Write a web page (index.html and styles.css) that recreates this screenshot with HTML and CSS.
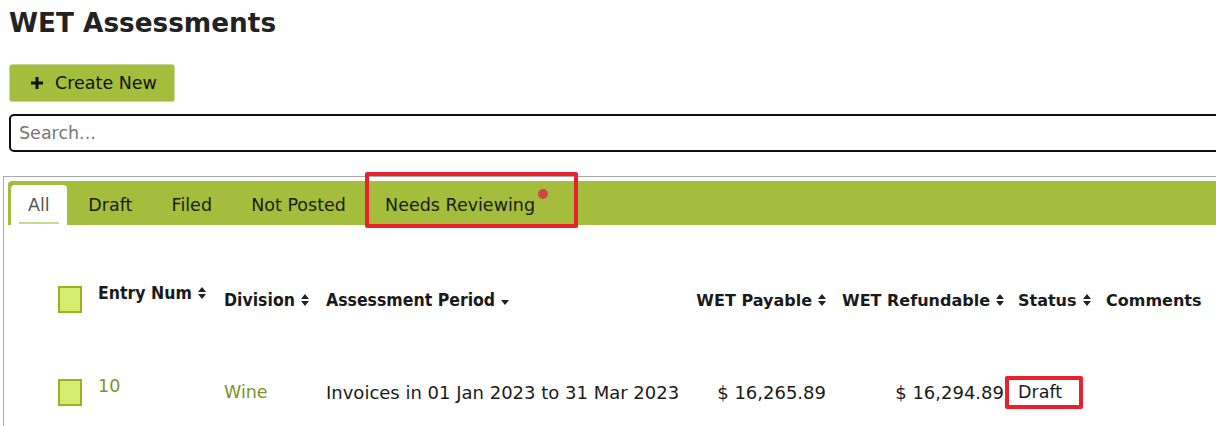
FILE: index.html
```html
<!DOCTYPE html>
<html>
<head>
<meta charset="utf-8">
<link rel="stylesheet" href="styles.css">
</head>
<body>
<div class="page">
  <h1 class="title">WET Assessments</h1>
  <button class="btn-create"><svg class="plus" viewBox="0 0 14 14" width="14" height="14"><path d="M7 1v12M1 7h12" stroke="#111" stroke-width="3"/></svg>Create New</button>
  <div class="search">Search...</div>
  <div class="panel">
    <div class="tabbar">
      <div class="tab active">All</div>
      <div class="tab">Draft</div>
      <div class="tab">Filed</div>
      <div class="tab">Not Posted</div>
      <div class="tab needs">Needs Reviewing<span class="dot"></span><span class="mark mark-tab"></span></div>
    </div>
    <div class="grid">
      <div class="cell c1 top"><span class="chk"></span></div>
      <div class="cell c2 top hd cond">Entry Num <svg class="sort sort-top" viewBox="0 0 8 12" width="8" height="12"><path d="M4 0L8 5H0zM4 12L0 7h8z" fill="#222"/></svg></div>
      <div class="cell c3 hd cond">Division <svg class="sort" viewBox="0 0 8 12" width="8" height="12"><path d="M4 0L8 5H0zM4 12L0 7h8z" fill="#222"/></svg></div>
      <div class="cell c4 hd cond">Assessment Period <svg class="caret" viewBox="0 0 8 5" width="8" height="5"><path d="M0 0h8L4 5z" fill="#222"/></svg></div>
      <div class="cell c5 hd right">WET Payable <svg class="sort" viewBox="0 0 8 12" width="8" height="12"><path d="M4 0L8 5H0zM4 12L0 7h8z" fill="#222"/></svg></div>
      <div class="cell c6 hd right">WET Refundable <svg class="sort" viewBox="0 0 8 12" width="8" height="12"><path d="M4 0L8 5H0zM4 12L0 7h8z" fill="#222"/></svg></div>
      <div class="cell c7 hd">Status <svg class="sort" viewBox="0 0 8 12" width="8" height="12"><path d="M4 0L8 5H0zM4 12L0 7h8z" fill="#222"/></svg></div>
      <div class="cell c8 hd">Comments</div>

      <div class="cell c1 top r2"><span class="chk"></span></div>
      <div class="cell c2 top link r2">10</div>
      <div class="cell c3 link">Wine</div>
      <div class="cell c4 period">Invoices in 01 Jan 2023 to 31 Mar 2023</div>
      <div class="cell c5 right num">$ 16,265.89</div>
      <div class="cell c6 right num">$ 16,294.89</div>
      <div class="cell c7"><span class="status">Draft<span class="mark mark-status"></span></span></div>
      <div class="cell c8"></div>
    </div>
  </div>
</div>
</body>
</html>
```
FILE: styles.css
```css
html, body {
  margin: 0;
  padding: 0;
  background: #fff;
  overflow: hidden;
}
body {
  font-family: "DejaVu Sans", Verdana, sans-serif;
  color: #1a1a1a;
  width: 1216px;
  height: 426px;
}
.page {
  width: 1260px;
  padding-left: 9px;
}
.title {
  margin: 0;
  padding-top: 8px;
  font-size: 26.3px;
  line-height: 30px;
  font-weight: bold;
  color: #222;
}
.btn-create {
  margin-top: 26px;
  display: flex;
  align-items: center;
  gap: 11px;
  width: 166px;
  height: 38px;
  padding: 0 0 0 20px;
  background: #a4bd3c;
  border: 1px solid #c9d49a;
  border-radius: 3px;
  font-family: "DejaVu Sans", Verdana, sans-serif;
  font-size: 17.5px;
  color: #111;
}
.plus { flex: none; }
.search {
  margin-top: 12px;
  height: 34px;
  border: 2px solid #111;
  border-radius: 5px;
  box-sizing: content-box;
  padding-left: 8px;
  line-height: 34px;
  font-size: 17.5px;
  color: #777;
}
.panel {
  margin-top: 24px;
  margin-left: -6px;
  border-top: 1px solid #aaa;
  border-left: 1px solid #aaa;
  padding: 4px 0 0 4px;
  height: 260px;
}
.tabbar {
  display: flex;
  align-items: flex-end;
  height: 44px;
  background: #a4bd3c;
  border-top-left-radius: 4px;
  padding-left: 3px;
}
.tab {
  position: relative;
  height: 40px;
  line-height: 40px;
  font-size: 17.5px;
  padding: 0 19.6px;
  color: #1c1c0c;
}
.tab.active {
  background: #fff;
  color: #555;
  border-radius: 4px 4px 0 0;
  padding: 0 17px;
  margin-right: 2px;
}
.tab.active::after {
  content: "";
  position: absolute;
  left: 8px;
  right: 8px;
  bottom: 1px;
  height: 2px;
  background: #c5d98a;
}
.dot {
  position: absolute;
  right: 7px;
  top: 4px;
  width: 10px;
  height: 10px;
  border-radius: 50%;
  background: #d8434a;
}
.mark {
  position: absolute;
  border: 4px solid #e8212b;
  border-radius: 2px;
  box-sizing: border-box;
}
.mark-tab {
  left: -1px;
  top: -13px;
  width: 213px;
  height: 56px;
}
.grid {
  display: grid;
  grid-template-columns: 48px 126px 102px 364px 140px 178px 92px 110px;
  grid-template-rows: 54px 60px;
  margin-left: 42px;
  margin-top: 48px;
  row-gap: 35px;
}
.cell {
  display: flex;
  align-items: center;
  font-size: 17.5px;
  white-space: nowrap;
}
.cell.top { align-items: flex-start; }
.c1 { padding-left: 8px; padding-top: 13px; }
.c1.r2 { padding-top: 17px; }
.c2.top { padding-top: 10px; }
.c2.r2 { padding-top: 14px; }
.hd { font-weight: bold; font-size: 16px; }
.cond {
  font-family: "DejaVu Sans Condensed", "DejaVu Sans", sans-serif;
  font-stretch: condensed;
}
.hd.cond { font-size: 17.5px; }
.period { font-size: 18px; }
.num { font-size: 18px; }
.right { justify-content: flex-end; padding-right: 4px; }
.c7 { padding-left: 10px; }
.c8 { padding-left: 6px; }
.sort { margin-left: 6px; flex: none; }
.sort-top { margin-top: 4px; }
.caret { margin-left: 6px; margin-top: 5px; flex: none; }
.chk {
  display: block;
  width: 24px;
  height: 27px;
  box-sizing: border-box;
  background: #d5ec6e;
  border: 2px solid #9cb11f;
}
.link { color: #7f9224; }
.status {
  position: relative;
  display: inline-block;
  line-height: 30px;
}
.mark-status {
  left: -13px;
  top: -1px;
  width: 78px;
  height: 33px;
}
```
